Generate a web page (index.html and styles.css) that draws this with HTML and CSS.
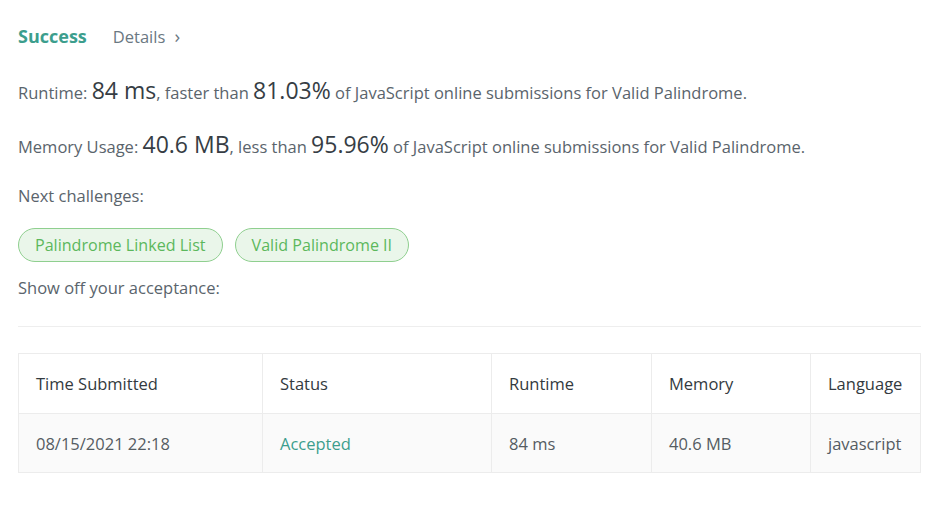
FILE: index.html
```html
<!DOCTYPE html>
<html>
<head>
<meta charset="utf-8">
<link rel="stylesheet" href="styles.css">
</head>
<body>
<div class="page">
  <div class="head">
    <span class="success">Success</span>
    <span class="details">Details <span class="chev">&#x203A;</span></span>
  </div>
  <p class="stat first">Runtime: <span class="big">84 ms</span>, faster than <span class="big">81.03%</span> of JavaScript online submissions for Valid Palindrome.</p>
  <p class="stat">Memory Usage: <span class="big">40.6 MB</span>, less than <span class="big">95.96%</span> of JavaScript online submissions for Valid Palindrome.</p>
  <p class="label next">Next challenges:</p>
  <div class="pills">
    <span class="pill">Palindrome Linked List</span>
    <span class="pill">Valid Palindrome II</span>
  </div>
  <p class="label show">Show off your acceptance:</p>
  <div class="rule"></div>
  <table class="subs">
    <thead>
      <tr>
        <th class="c1">Time Submitted</th>
        <th class="c2">Status</th>
        <th class="c3">Runtime</th>
        <th class="c4">Memory</th>
        <th class="c5">Language</th>
      </tr>
    </thead>
    <tbody>
      <tr>
        <td>08/15/2021 22:18</td>
        <td class="accepted">Accepted</td>
        <td>84 ms</td>
        <td>40.6 MB</td>
        <td>javascript</td>
      </tr>
    </tbody>
  </table>
</div>
</body>
</html>
```
FILE: styles.css
```css
html, body {
  margin: 0;
  padding: 0;
  background: #fff;
}
.page {
  padding: 23px 19px 0 18px;
  font-family: "Open Sans", "Noto Sans", sans-serif;
  font-size: 16.5px;
  color: #5a646c;
}
.head {
  display: flex;
  align-items: baseline;
  gap: 26px;
  height: 26px;
}
.success {
  font-size: 18px;
  font-weight: 700;
  color: #3c9e8d;
}
.details {
  font-size: 16.5px;
  color: #6b7882;
}
.chev {
  margin-left: 5px;
  font-size: 19px;
}
.stat {
  margin: 0;
  line-height: 54px;
  height: 54px;
}
.stat.first {
  margin-top: 14px;
}
.big {
  font-size: 23px;
  color: #363d44;
}
.label {
  margin: 0;
  line-height: 28px;
}
.next {
  margin-top: 11px;
}
.pills {
  display: flex;
  gap: 12px;
  margin: 18px 0 0 0;
}
.pill {
  display: inline-flex;
  align-items: center;
  height: 32px;
  padding: 0 16px;
  border: 1px solid #8fcf8f;
  border-radius: 17px;
  background: #eaf6ea;
  color: #5cb85c;
  font-size: 16.1px;
}
.show {
  margin-top: 12px;
}
.rule {
  height: 1px;
  background: #eeeeee;
  margin-top: 24px;
  margin-bottom: 26px;
}
.subs {
  width: 903px;
  border-collapse: collapse;
  font-size: 16.5px;
}
.subs th, .subs td {
  border: 1px solid #ececec;
  text-align: left;
  padding: 0 17px;
  font-weight: 400;
}
.subs th {
  height: 59px;
  color: #333a40;
  background: #fff;
}
.subs td {
  height: 58px;
  color: #555c62;
  background: #fafafa;
}
.subs .accepted {
  color: #3c9e8d;
}
.c1 { width: 209px; }
.c2 { width: 194px; }
.c3 { width: 125px; }
.c4 { width: 124px; }
```
